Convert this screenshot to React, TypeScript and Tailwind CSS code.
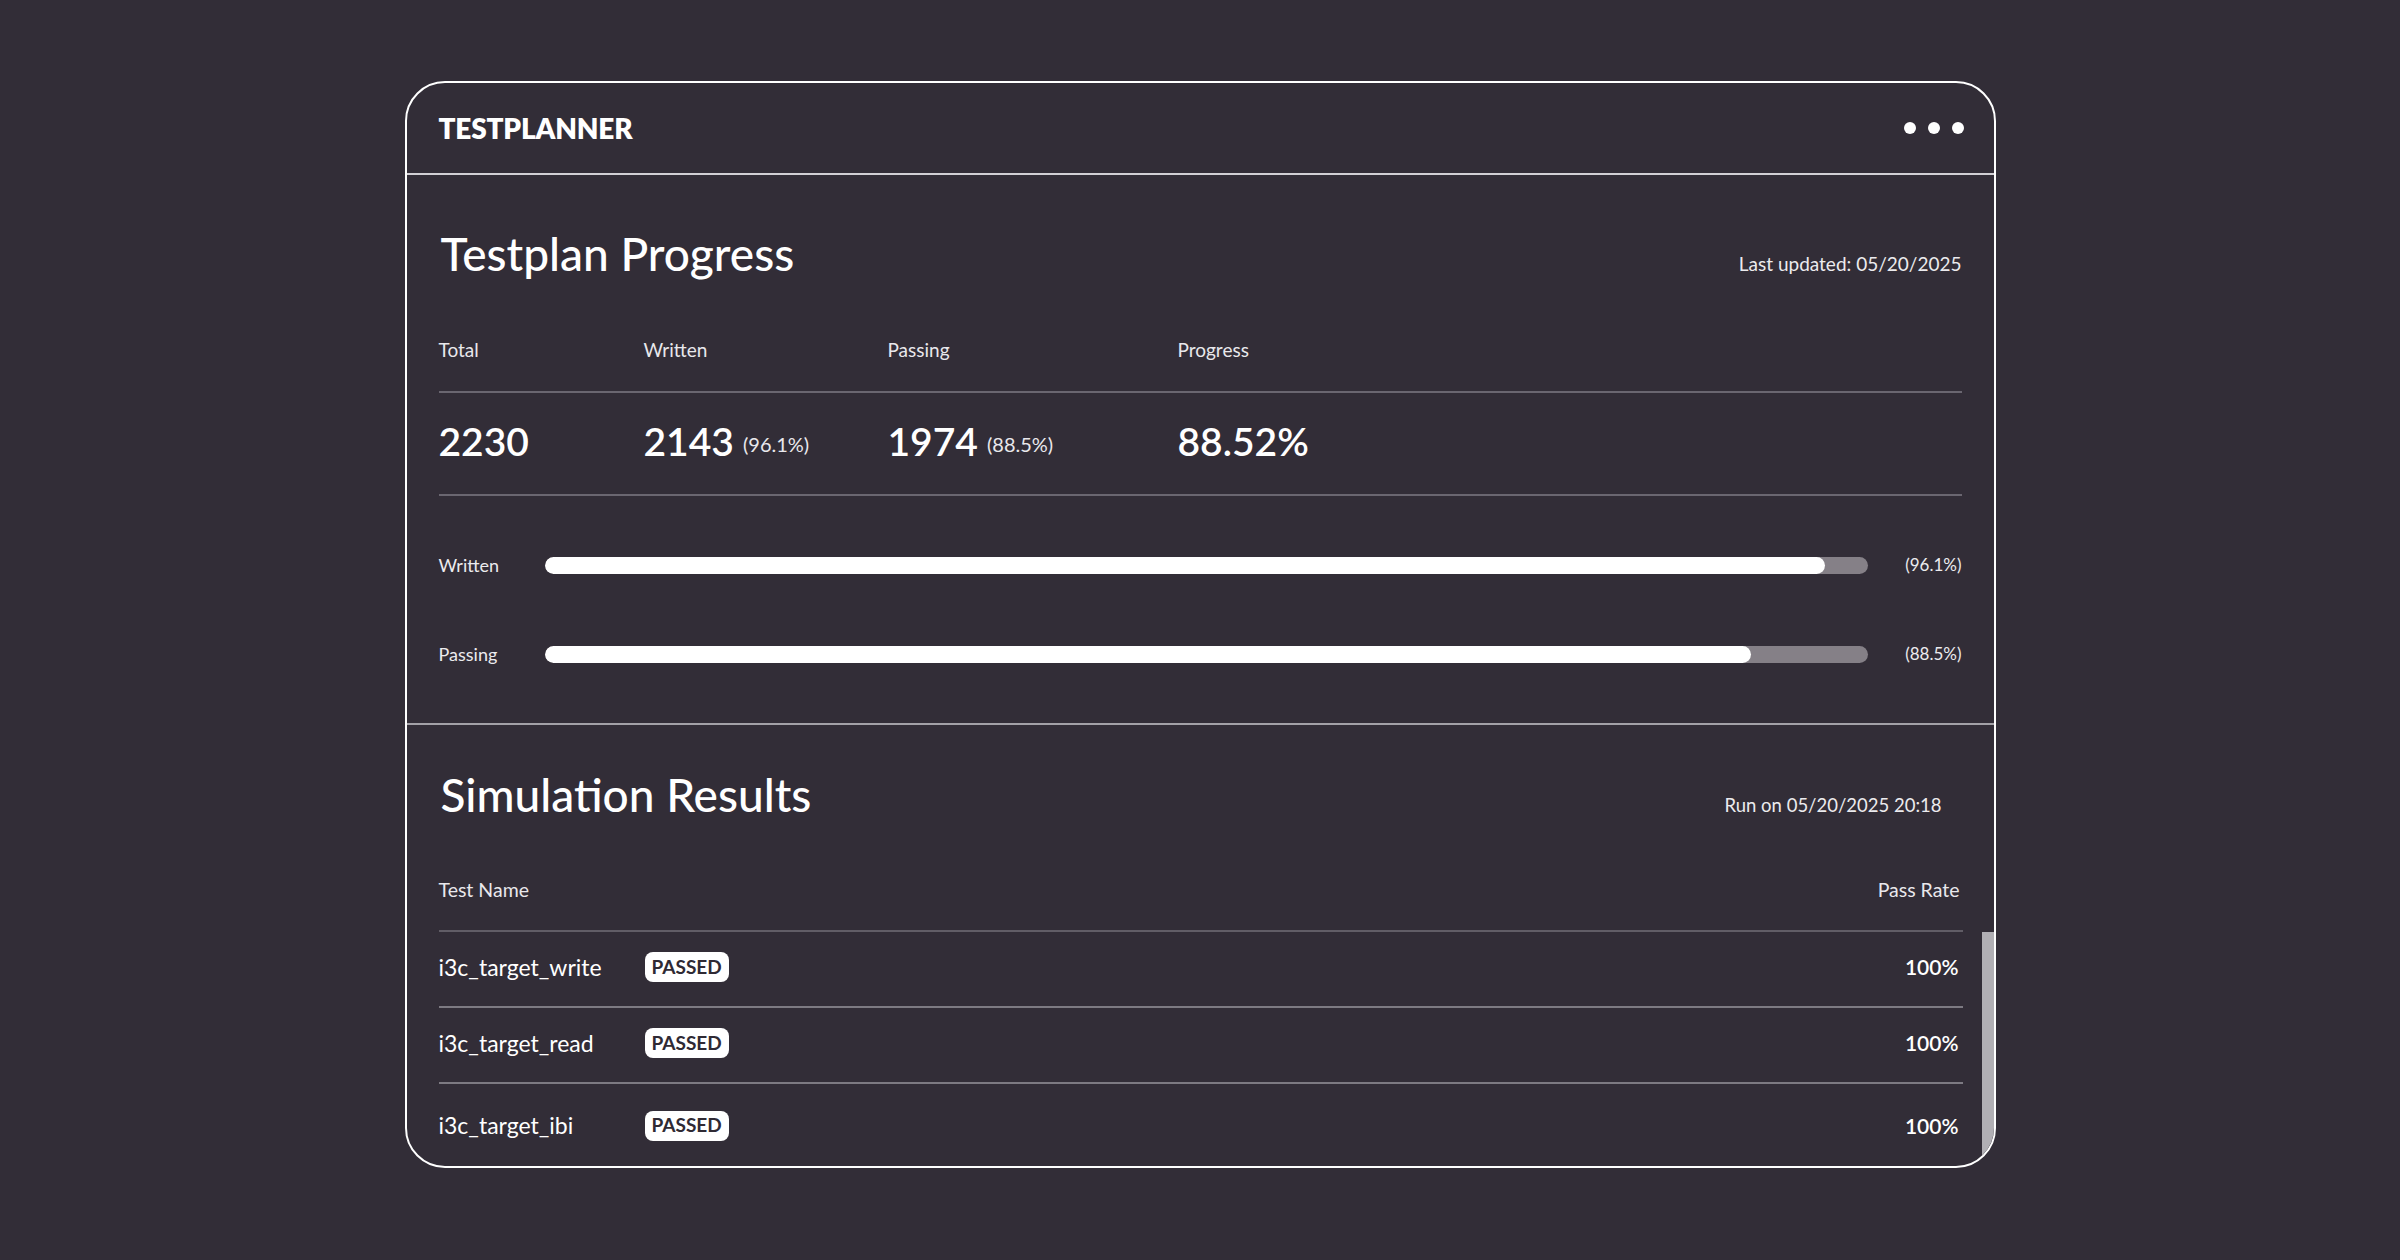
const font = { fontFamily: 'Lato, "Noto Sans", sans-serif' }

const stats = [
  { label: 'Total', value: '2230', width: 'w-[205px]' },
  { label: 'Written', value: '2143', extra: '(96.1%)', width: 'w-[244px]' },
  { label: 'Passing', value: '1974', extra: '(88.5%)', width: 'w-[290px]' },
  { label: 'Progress', value: '88.52%', width: 'flex-1' },
]

const bars = [
  { label: 'Written', fill: 'w-[96.8%]', pct: '(96.1%)' },
  { label: 'Passing', fill: 'w-[91.2%]', pct: '(88.5%)' },
]

const tests = [
  { name: 'i3c_target_write', rate: '100%' },
  { name: 'i3c_target_read', rate: '100%' },
  { name: 'i3c_target_ibi', rate: '100%' },
]

export default function App() {
  return (
    <div className="min-h-screen bg-[#322d37] pt-[81px] text-white" style={font}>
      <div className="mx-auto w-[1591px] rounded-[40px] border-2 border-white overflow-hidden">
        {/* Header */}
        <div className="h-[92px] flex items-center justify-between pl-[32px] pr-[30px] border-b-2 border-[#d2d0d5]">
          <span className="text-[28px] font-extrabold tracking-[-0.2px] text-white">TESTPLANNER</span>
          <div className="flex items-center gap-[12px]">
            <span className="w-[12px] h-[12px] rounded-full bg-white" />
            <span className="w-[12px] h-[12px] rounded-full bg-white" />
            <span className="w-[12px] h-[12px] rounded-full bg-white" />
          </div>
        </div>

        {/* Testplan progress */}
        <section className="px-[32px] pt-[53px] pb-[57px] border-b-2 border-[#a3a1a7]">
          <div className="flex items-baseline justify-between h-[52px]">
            <h2 className="text-[46px] leading-[52px] font-medium pl-[2px]">Testplan Progress</h2>
            <span className="text-[19px] text-[#ecebee]">Last updated: 05/20/2025</span>
          </div>

          <div className="mt-[58px] flex h-[24px] items-center text-[19px] text-[#e9e8ec]">
            {stats.map((s) => (
              <div key={s.label} className={s.width}>{s.label}</div>
            ))}
          </div>
          <div className="mt-[29px] border-t-2 border-[#6a6670]" />

          <div className="flex h-[46px] items-center mt-[25px]">
            {stats.map((s) => (
              <div key={s.label} className={`${s.width} flex items-baseline`}>
                <span className="text-[39px] leading-[46px] font-semibold">{s.value}</span>
                {s.extra && (
                  <span className="ml-[9px] text-[20px] text-[#e9e8ec] -translate-y-[4px]">{s.extra}</span>
                )}
              </div>
            ))}
          </div>
          <div className="mt-[30px] border-t-2 border-[#6a6670]" />

          <div className="mt-[57px] flex flex-col gap-[65px]">
            {bars.map((b) => (
              <div key={b.label} className="flex h-[24px] items-center">
                <span className="w-[106px] text-[18px] text-[#ecebee]">{b.label}</span>
                <div className="flex-1 h-[17px] rounded-full bg-[#858087] overflow-hidden">
                  <div className={`${b.fill} h-full rounded-full bg-white`} />
                </div>
                <span className="w-[94px] text-right text-[17px] text-[#ecebee]">{b.pct}</span>
              </div>
            ))}
          </div>
        </section>

        {/* Simulation results */}
        <section className="pt-[44px]">
          <div className="flex items-baseline justify-between h-[52px] pl-[32px] pr-[52px]">
            <h2 className="text-[46px] leading-[52px] font-medium pl-[2px]">Simulation Results</h2>
            <span className="text-[18.5px] text-[#ecebee]">Run on 05/20/2025 20:18</span>
          </div>

          <div className="mt-[59px] ml-[32px] mr-[31px] pb-[28px] border-b-2 border-[#615d66] flex h-[52px] items-end justify-between text-[19.5px] text-[#e9e8ec]">
            <span className="leading-[24px]">Test Name</span>
            <span className="leading-[24px] pr-[3px]">Pass Rate</span>
          </div>

          <div className="flex h-[234px] overflow-hidden">
            <div className="flex-1 pl-[32px] pr-[19px]">
              {tests.map((t, i) => (
                <div
                  key={t.name}
                  className={`flex items-center h-[76px] ${i < tests.length - 1 ? 'pb-[4px] border-b-2 border-[#7d7a82]' : 'pt-[8px] pb-[1px]'}`}
                >
                  <span className="w-[206px] text-[23px]">{t.name}</span>
                  <span className="h-[30px] px-[7px] flex items-center rounded-[8px] bg-white text-[#2f2a34] text-[19px] font-bold">
                    PASSED
                  </span>
                  <span className="ml-auto pr-[4px] text-[21px] font-semibold">{t.rate}</span>
                </div>
              ))}
            </div>
            <div className="w-[12px] bg-[#b1afb4]" />
          </div>
        </section>
      </div>
    </div>
  )
}
